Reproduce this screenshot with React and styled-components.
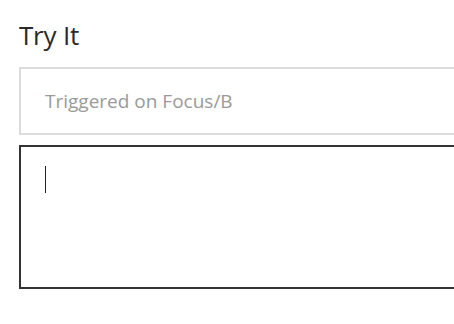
import React from "react";
import styled, { createGlobalStyle } from "styled-components";

const Global = createGlobalStyle`
  html, body { margin: 0; padding: 0; background: #fff; overflow: hidden; }
  body { font-family: "Open Sans", "Liberation Sans", sans-serif; }
`;

const Page = styled.div`
  width: 560px;
  padding: 17px 0 0 19px;
  display: flex;
  flex-direction: column;
`;

const Title = styled.h2`
  margin: 0 0 14px;
  font-size: 26px;
  font-weight: 400;
  line-height: 36px;
  letter-spacing: -0.2px;
  color: #2a2a2a;
`;

const Field = styled.div`
  box-sizing: border-box;
  width: 100%;
  height: ${(p) => p.$h}px;
  border: 2px solid ${(p) => p.$border};
  padding: ${(p) => p.$pad};
  font-size: 19px;
  color: #9a9a9a;
  display: flex;
  align-items: ${(p) => p.$align};
`;

const Stack = styled.div`
  display: flex;
  flex-direction: column;
  gap: 10px;
`;

const Caret = styled.span`
  display: block;
  width: 1px;
  height: 27px;
  background: #222;
`;

export default function App() {
  return (
    <>
      <Global />
      <Page>
        <Title>Try It</Title>
        <Stack>
          <Field $h={68} $border="#dcdcdc" $pad="0 24px" $align="center">
            Triggered on Focus/B
          </Field>
          <Field $h={144} $border="#333" $pad="19px 24px" $align="flex-start">
            <Caret />
          </Field>
        </Stack>
      </Page>
    </>
  );
}
